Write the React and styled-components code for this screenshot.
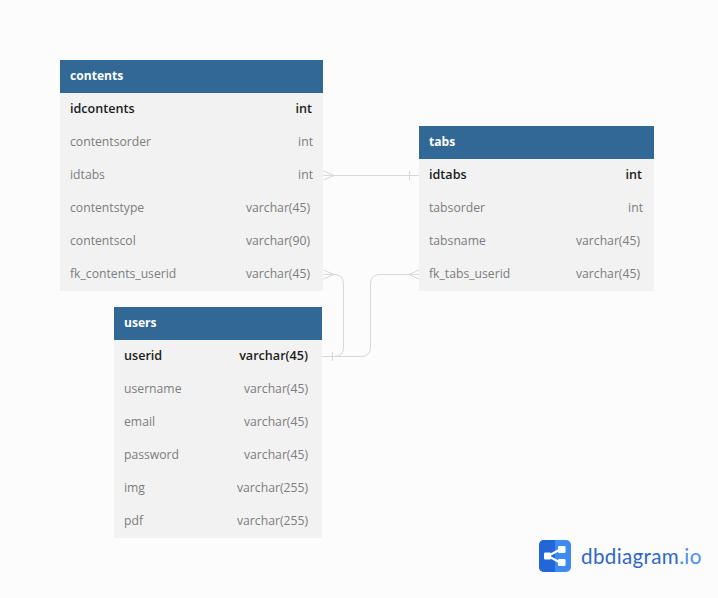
import React from "react";
import styled, { createGlobalStyle } from "styled-components";

const Global = createGlobalStyle`
  html, body { margin: 0; padding: 0; background: #fcfcfc; }
  body { font-family: "Open Sans", "Noto Sans", sans-serif; }
`;

const Canvas = styled.div`
  position: relative;
  width: 718px;
  height: 598px;
  overflow: hidden;
  background: #fcfcfc;
`;

const Table = styled.div`
  position: absolute;
  left: ${(p) => p.$x}px;
  top: ${(p) => p.$y}px;
  width: ${(p) => p.$w}px;
  background: #f2f2f2;
`;

const Header = styled.div`
  height: 33px;
  box-sizing: border-box;
  padding: 0 10px 2px;
  display: flex;
  align-items: center;
  background: #316896;
  color: #fff;
  font-size: 12.1px;
  font-weight: 700;
`;

const Row = styled.div`
  height: 33px;
  box-sizing: border-box;
  display: flex;
  align-items: center;
  justify-content: space-between;
  padding: 0 ${(p) => p.$pr}px 2px 10px;
  font-size: ${(p) => (p.$pk ? 12.6 : 12.2)}px;
  font-weight: ${(p) => (p.$pk ? 600 : 400)};
  color: ${(p) => (p.$pk ? "#1c1c1c" : "#7d7d7d")};
`;

const Lines = styled.svg`
  position: absolute;
  inset: 0;
`;

const Brand = styled.div`
  position: absolute;
  left: 539px;
  top: 540px;
  display: flex;
  align-items: center;
  gap: 10px;
`;

const BrandText = styled.span`
  font-family: Lato, "Open Sans", sans-serif;
  font-size: 20.6px;
  letter-spacing: 0.35px;
  color: #2f68c8;
  line-height: 32px;
`;

const BrandSuffix = styled.span`
  color: #4a8cf0;
`;

const tables = [
  {
    name: "contents", x: 60, y: 60, w: 263.4,
    rows: [
      ["idcontents", "int", true, 11.4],
      ["contentsorder", "int", false, 10.4],
      ["idtabs", "int", false, 10.4],
      ["contentstype", "varchar(45)", false, 13.4],
      ["contentscol", "varchar(90)", false, 13.4],
      ["fk_contents_userid", "varchar(45)", false, 13.4],
    ],
  },
  {
    name: "tabs", x: 419, y: 126, w: 234.6,
    rows: [
      ["idtabs", "int", true, 11.6],
      ["tabsorder", "int", false, 10.6],
      ["tabsname", "varchar(45)", false, 13.6],
      ["fk_tabs_userid", "varchar(45)", false, 13.6],
    ],
  },
  {
    name: "users", x: 114, y: 307, w: 208,
    rows: [
      ["userid", "varchar(45)", true, 14],
      ["username", "varchar(45)", false, 14],
      ["email", "varchar(45)", false, 14],
      ["password", "varchar(45)", false, 14],
      ["img", "varchar(255)", false, 14],
      ["pdf", "varchar(255)", false, 14],
    ],
  },
];

export default function App() {
  return (
    <Canvas>
      <Global />
      <Lines width="718" height="598" fill="none" stroke="#d8d8d8" strokeWidth="1">
        <path d="M323.5 175.5H419M409.5 171V180.5M323.5 171L334 175.5L323.5 180" />
        <path d="M323.5 274.5H334Q343.5 274.5 343.5 284V347Q343.5 356.5 334 356.5H322M332.5 352V361M323.5 270L334 274.5L323.5 279" />
        <path d="M322 356.5H361Q370.5 356.5 370.5 347V284Q370.5 274.5 380 274.5H419M419 270L409 274.5L419 279" />
      </Lines>
      {tables.map((t) => (
        <Table key={t.name} $x={t.x} $y={t.y} $w={t.w}>
          <Header>{t.name}</Header>
          {t.rows.map(([n, ty, pk, pr]) => (
            <Row key={n} $pk={pk} $pr={pr}>
              <span>{n}</span>
              <span>{ty}</span>
            </Row>
          ))}
        </Table>
      ))}
      <Brand>
        <svg width="32" height="32" viewBox="0 0 32 32">
          <rect width="32" height="32" rx="5" fill="#3d8bf2" />
          <path d="M5 0H16V32H5A5 5 0 0 1 0 27V5A5 5 0 0 1 5 0Z" fill="#2266d8" />
          <path d="M9 16L21 9.5M9 16L21 22.5" stroke="#fff" strokeWidth="2" />
          <rect x="5" y="12.5" width="7" height="7" rx="1.2" fill="#fff" />
          <rect x="19" y="6" width="7.5" height="7" rx="1.2" fill="#fff" />
          <rect x="19" y="19" width="7.5" height="7" rx="1.2" fill="#fff" />
        </svg>
        <BrandText>dbdiagram<BrandSuffix>.io</BrandSuffix></BrandText>
      </Brand>
    </Canvas>
  );
}
